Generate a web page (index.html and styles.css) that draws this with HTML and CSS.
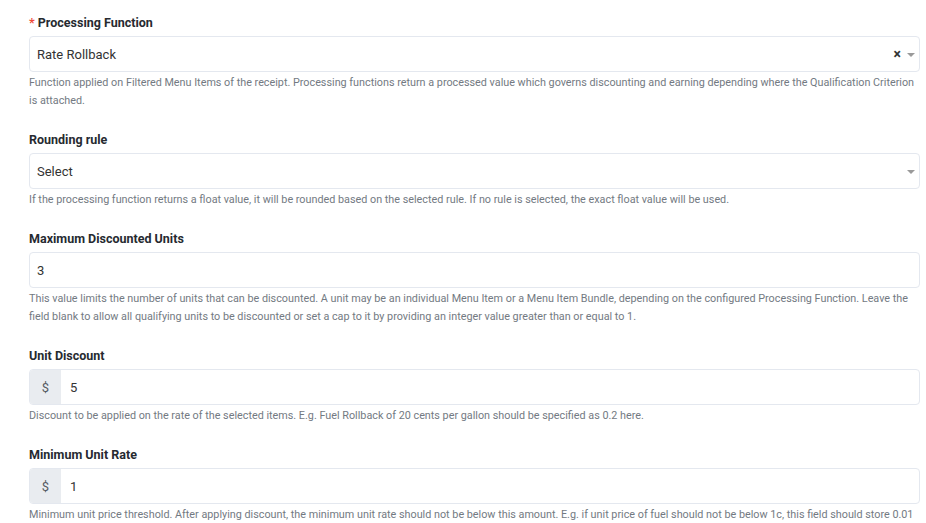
FILE: index.html
```html
<!DOCTYPE html>
<html>
<head>
<meta charset="utf-8">
<link rel="stylesheet" href="styles.css">
</head>
<body>
<div class="form">
  <div class="group">
    <label class="label"><span class="req">*</span> Processing Function</label>
    <div class="control select">
      <span class="value">Rate Rollback</span>
      <span class="icons"><span class="clear">&#215;</span><span class="caret"></span></span>
    </div>
    <p class="help">Function applied on Filtered Menu Items of the receipt. Processing functions return a processed value which governs discounting and earning depending where the Qualification Criterion is attached.</p>
  </div>
  <div class="group">
    <label class="label">Rounding rule</label>
    <div class="control select">
      <span class="value">Select</span>
      <span class="icons"><span class="caret"></span></span>
    </div>
    <p class="help">If the processing function returns a float value, it will be rounded based on the selected rule. If no rule is selected, the exact float value will be used.</p>
  </div>
  <div class="group">
    <label class="label">Maximum Discounted Units</label>
    <div class="control">
      <span class="value">3</span>
    </div>
    <p class="help">This value limits the number of units that can be discounted. A unit may be an individual Menu Item or a Menu Item Bundle, depending on the configured Processing Function. Leave the field blank to allow all qualifying units to be discounted or set a cap to it by providing an integer value greater than or equal to 1.</p>
  </div>
  <div class="group">
    <label class="label">Unit Discount</label>
    <div class="control addon-control">
      <span class="addon">$</span>
      <span class="value">5</span>
    </div>
    <p class="help">Discount to be applied on the rate of the selected items. E.g. Fuel Rollback of 20 cents per gallon should be specified as 0.2 here.</p>
  </div>
  <div class="group">
    <label class="label">Minimum Unit Rate</label>
    <div class="control addon-control">
      <span class="addon">$</span>
      <span class="value">1</span>
    </div>
    <p class="help">Minimum unit price threshold. After applying discount, the minimum unit rate should not be below this amount. E.g. if unit price of fuel should not be below 1c, this field should store 0.01</p>
  </div>
</div>
</body>
</html>
```

FILE: styles.css
```css
html, body {
  margin: 0;
  padding: 0;
  background: #ffffff;
}
body {
  font-family: Roboto, "Liberation Sans", sans-serif;
  color: #2b2b2b;
  overflow: hidden;
}
.form {
  width: 891px;
  padding: 14px 0 0 29px;
}
.group {
  margin-bottom: 21px;
}
.label {
  display: block;
  font-size: 12.5px;
  font-weight: 700;
  line-height: 18px;
  color: #262a30;
  margin-bottom: 4px;
}
.req {
  color: #f04b3c;
}
.control {
  box-sizing: border-box;
  height: 36px;
  border: 1px solid #e4e8ef;
  border-radius: 4px;
  display: flex;
  align-items: center;
  padding: 0 7px;
  font-size: 13px;
  color: #333333;
}
.select {
  padding-right: 4px;
}
.value {
  flex: 1;
}
.icons {
  display: flex;
  align-items: center;
  gap: 6px;
}
.clear {
  font-size: 14px;
  font-weight: 700;
  color: #333;
  line-height: 1;
}
.caret {
  width: 0;
  height: 0;
  border-left: 4px solid transparent;
  border-right: 4px solid transparent;
  border-top: 4px solid #9a9a9a;
  margin-top: 2px;
}
.addon-control {
  padding: 0;
  overflow: hidden;
}
.addon {
  width: 31px;
  align-self: stretch;
  background: #e9ecf0;
  display: flex;
  align-items: center;
  justify-content: center;
  color: #555b63;
  font-size: 13px;
}
.addon-control .value {
  padding-left: 9px;
}
.help {
  margin: 2px 0 0;
  font-size: 10.8px;
  line-height: 18px;
  color: #737a82;
}
```
